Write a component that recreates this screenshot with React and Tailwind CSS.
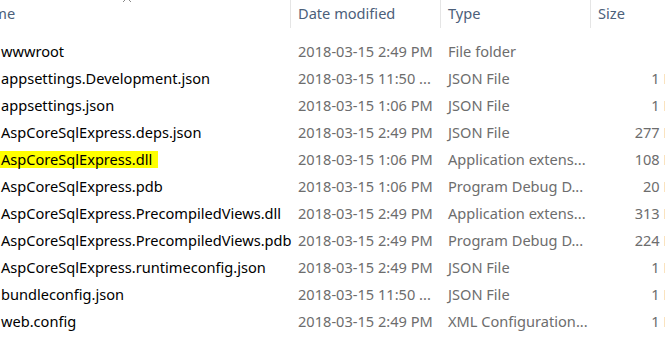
import React from 'react';

const files = [
  { name: 'wwwroot', date: '2018-03-15 2:49 PM', type: 'File folder', size: '' },
  { name: 'appsettings.Development.json', date: '2018-03-15 11:50 ...', type: 'JSON File', size: '1 KB' },
  { name: 'appsettings.json', date: '2018-03-15 1:06 PM', type: 'JSON File', size: '1 KB' },
  { name: 'AspCoreSqlExpress.deps.json', date: '2018-03-15 2:49 PM', type: 'JSON File', size: '277 KB' },
  { name: 'AspCoreSqlExpress.dll', date: '2018-03-15 1:06 PM', type: 'Application extens...', size: '108 KB', marked: true },
  { name: 'AspCoreSqlExpress.pdb', date: '2018-03-15 1:06 PM', type: 'Program Debug D...', size: '20 KB' },
  { name: 'AspCoreSqlExpress.PrecompiledViews.dll', date: '2018-03-15 2:49 PM', type: 'Application extens...', size: '313 KB' },
  { name: 'AspCoreSqlExpress.PrecompiledViews.pdb', date: '2018-03-15 2:49 PM', type: 'Program Debug D...', size: '224 KB' },
  { name: 'AspCoreSqlExpress.runtimeconfig.json', date: '2018-03-15 2:49 PM', type: 'JSON File', size: '1 KB' },
  { name: 'bundleconfig.json', date: '2018-03-15 11:50 ...', type: 'JSON File', size: '1 KB' },
  { name: 'web.config', date: '2018-03-15 2:49 PM', type: 'XML Configuration...', size: '1 KB' },
];

export default function App() {
  return (
    <div className="w-[665px] h-[349px] overflow-hidden bg-white text-[14.6px] relative" style={{ fontFamily: '"Noto Sans", "Open Sans", sans-serif' }}>
      <svg className="absolute left-[122px] top-[-4px]" width="10" height="8" viewBox="0 0 10 8">
        <path d="M1 6 L5 2 L9 6" fill="none" stroke="#8a8a8a" strokeWidth="1" />
      </svg>
      <div className="w-[720px]">
        <div className="grid grid-cols-[290px_150px_150px_130px] h-[28px] text-[#4c607a]">
          <div className="flex items-center overflow-hidden">
            <span className="ml-[-26px]">Name</span>
          </div>
          <div className="flex items-center border-l border-[#e5e5e5] pl-[7px]">Date modified</div>
          <div className="flex items-center border-l border-[#e5e5e5] pl-[7px]">Type</div>
          <div className="flex items-center border-l border-[#e5e5e5] pl-[7px]">Size</div>
        </div>
        <div className="mt-[10px]">
          {files.map((f) => (
            <div key={f.name} className="grid grid-cols-[290px_150px_150px_130px] h-[27px] items-center">
              <div className="pl-[1px] text-black whitespace-nowrap">
                <span className={f.marked ? 'bg-[#ffff00] pr-[6px] ml-[-1px] pl-[1px] inline-block leading-[17px]' : ''}>{f.name}</span>
              </div>
              <div className="pl-[8px] text-[#6d6d6d] whitespace-nowrap">{f.date}</div>
              <div className="pl-[8px] text-[#6d6d6d] whitespace-nowrap">{f.type}</div>
              <div className="text-right pr-[38px] text-[#6d6d6d] whitespace-nowrap">{f.size}</div>
            </div>
          ))}
        </div>
      </div>
    </div>
  );
}
